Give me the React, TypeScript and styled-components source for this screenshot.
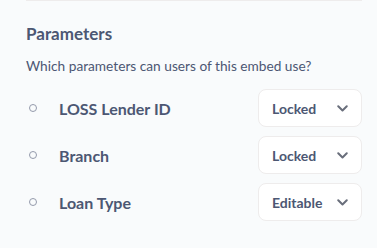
import React from "react";
import styled, { createGlobalStyle } from "styled-components";

const Global = createGlobalStyle`
  html, body { margin: 0; padding: 0; background: #f9fbfc; }
  body { font-family: Lato, "Noto Sans", sans-serif; -webkit-font-smoothing: antialiased; }
`;

const Panel = styled.div`
  width: 377px;
  height: 248px;
  box-sizing: border-box;
  padding: 0 15px 0 26px;
  background: #f9fbfc;
  overflow: hidden;
`;

const Divider = styled.div`
  height: 1px;
  background: #eeecec;
`;

const Heading = styled.h3`
  margin: 23px 0 0;
  font-size: 17px;
  font-weight: 700;
  line-height: 20px;
  color: #4c5773;
`;

const Description = styled.p`
  margin: 13px 0 0;
  font-size: 13.7px;
  line-height: 18px;
  color: #4c5773;
`;

const List = styled.div`
  margin-top: 14px;
  display: flex;
  flex-direction: column;
  gap: 9px;
`;

const Row = styled.div`
  display: flex;
  align-items: center;
  justify-content: space-between;
  height: 38px;
`;

const LabelWrap = styled.div`
  display: flex;
  align-items: center;
`;

const Dot = styled.span`
  width: 6px;
  height: 6px;
  margin-left: 3px;
  border: 1.5px solid #949aab;
  border-radius: 50%;
`;

const Label = styled.span`
  margin-left: 22px;
  font-size: 16px;
  font-weight: 700;
  color: #4c5773;
`;

const Select = styled.button`
  width: 104px;
  height: 38px;
  box-sizing: border-box;
  display: flex;
  align-items: center;
  justify-content: space-between;
  padding: 0 13px 0 13px;
  background: #fff;
  border: 1px solid #eeecec;
  border-radius: 8px;
  font-family: inherit;
  font-size: 14px;
  font-weight: 700;
  color: #4c5773;
  cursor: pointer;
`;

const Chevron = () => (
  <svg width="11" height="7" viewBox="0 0 11 7" fill="none">
    <path d="M1.25 1.25 L5.5 5.5 L9.75 1.25" stroke="#696e7b" strokeWidth="2" strokeLinecap="round" strokeLinejoin="round" />
  </svg>
);

const params = [
  { name: "LOSS Lender ID", mode: "Locked" },
  { name: "Branch", mode: "Locked" },
  { name: "Loan Type", mode: "Editable" },
];

export default function App() {
  return (
    <>
      <Global />
      <Panel>
        <Divider />
        <Heading>Parameters</Heading>
        <Description>Which parameters can users of this embed use?</Description>
        <List>
          {params.map((p) => (
            <Row key={p.name}>
              <LabelWrap>
                <Dot />
                <Label>{p.name}</Label>
              </LabelWrap>
              <Select>
                {p.mode}
                <Chevron />
              </Select>
            </Row>
          ))}
        </List>
      </Panel>
    </>
  );
}
